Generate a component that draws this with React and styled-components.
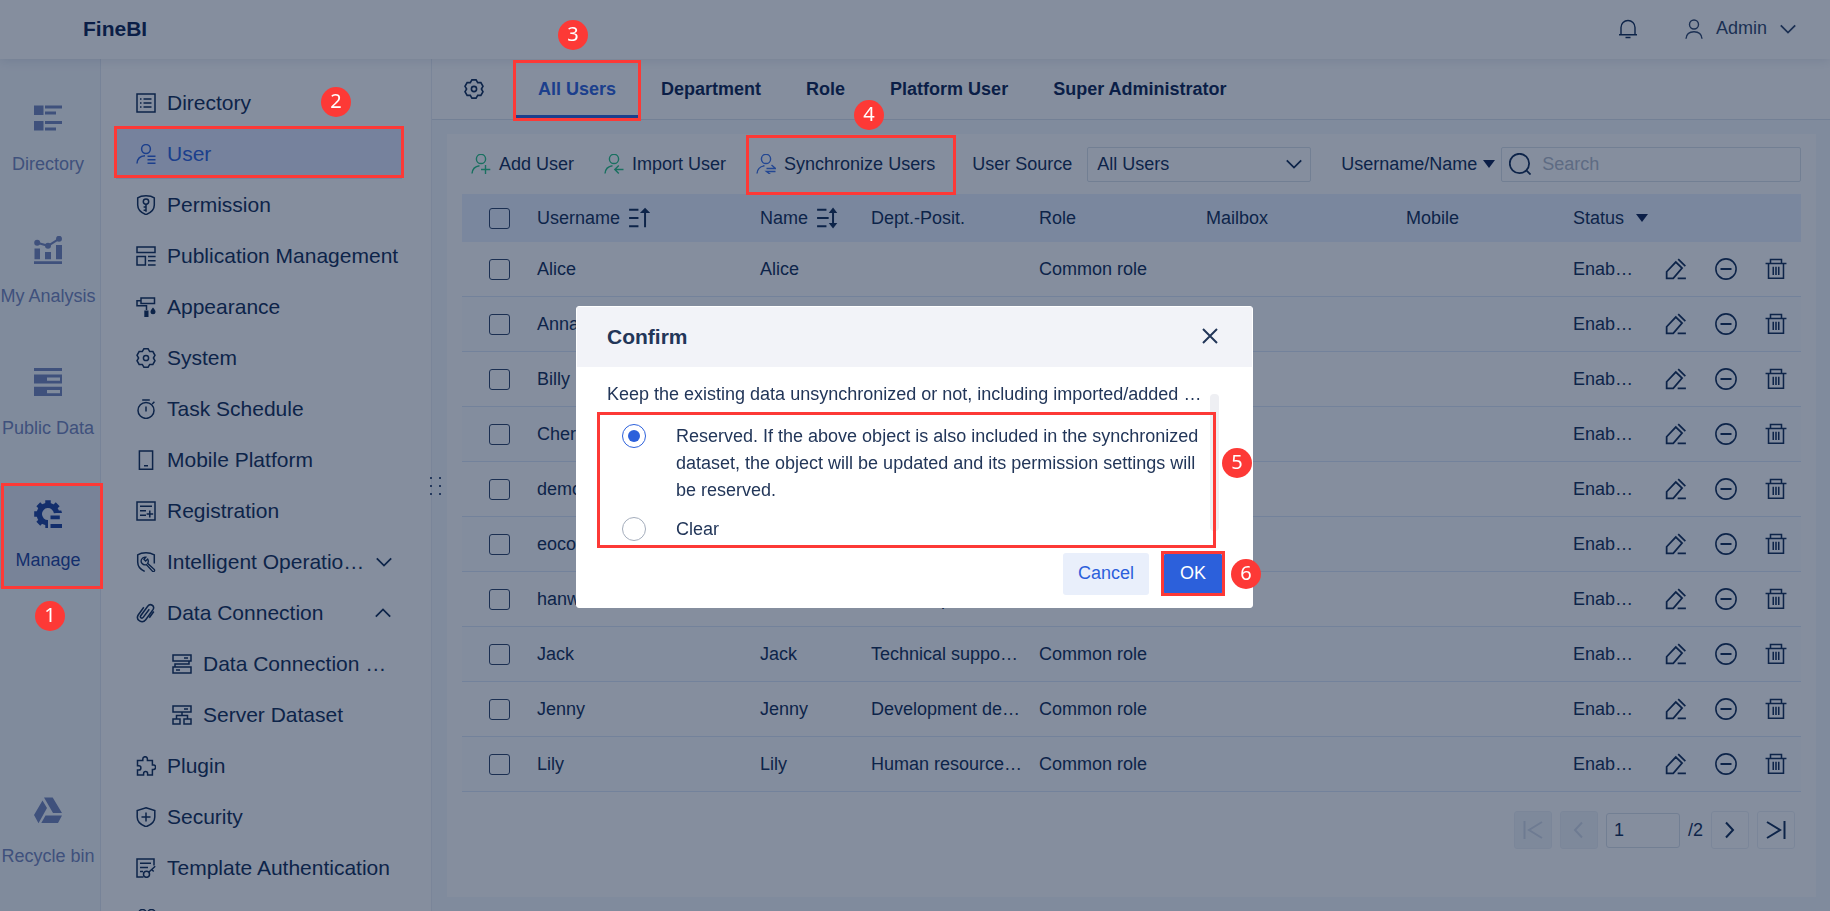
import { useState } from "react";
import styled, { createGlobalStyle, css } from "styled-components";

const GEAR =
  "M7.9.84h4.2l1.6 2.76 3.17-.01 2.12 3.66L17.4 10l1.59 2.75-2.12 3.66-3.17-.01-1.6 2.76H7.9l-1.6-2.76-3.17.01-2.12-3.66L2.6 10 1.01 7.25l2.12-3.66 3.17.01z";

const icons = {
  list: (
    <>
      <path d="M1 1h18v18H1z" />
      <path d="M7.5 6h8M7.5 10h8M7.5 14h8M4 6h1.5M4 10h1.5M4 14h1.5" />
    </>
  ),
  user: (
    <>
      <circle cx="10" cy="5" r="4.4" />
      <path d="M1 19.5c.3-4.6 3-7.4 8-7.7M11.5 12.3h8M11.5 15.8h8M11.5 19.3h8" />
    </>
  ),
  permission: (
    <>
      <path d="M10 .8c3 0 6 .4 8.3 2V10c0 5-3.3 7.7-8.3 9.6C5 17.7 1.7 15 1.7 10V2.8C4 1.2 7 .8 10 .8z" />
      <circle cx="10" cy="6.6" r="2.7" />
      <path d="M10 9.3v7.4M10 12H7.6M10 15.2H7.6" />
    </>
  ),
  publication: (
    <path d="M1 1h18v5.6H1zM1 10.4h8.4V19H1zM12 10.4h7.6M12 14.7h7.6M12 19h7.6" />
  ),
  appearance: (
    <>
      <path d="M5 1h13.5v5.6H5zM5 3.8H1v5h9.5V13" />
      <path d="M8.3 13.5h4.2V20H8.3zM17 10.5c1.6 2 2.5 3 2.5 4.2a2.5 2.5 0 0 1-5 0c0-1.2.9-2.2 2.5-4.2z" fill="currentColor" stroke="none" />
    </>
  ),
  gear: (
    <>
      <path d={GEAR} />
      <circle cx="10" cy="10" r="2.6" />
    </>
  ),
  timer: (
    <>
      <circle cx="10" cy="11.4" r="8" />
      <path d="M6.2 1h7.6M10 7.5v5M16.2 5l2.2-2.2" />
    </>
  ),
  mobile: <path d="M3.4 1h13.2v18.3H3.4zM8 15.7h4" />,
  registration: (
    <path d="M1 1h18v18H1zM4 5.3h12M4 9.8h6M4 14.3h6M13.8 9.6v6.8M10.6 13h6.6" />
  ),
  operation: (
    <>
      <path d="M18.300 11.500V2.800C15.500 1.300 13 .8 10 .8S4 1.300 1.700 2.800V10c0 5 2.600 7.500 7 9.400" />
      <path d="M9.800 5.200 7.900 7.300 9.600 9l2.100-1.900c1 1.700.8 3-.1 4.200l6.700 6.200c1 1.200-.6 2.700-1.800 1.700l-6.200-6.600c-3.300 1.200-6.300-2.300-4.700-5.300.9-1.700 2.600-2.500 4.200-2.100z" strokeWidth="1.300" />
    </>
  ),
  clip: (
    <path d="M13.3 6.2 7.200 14.400c-1.300 1.700-3.600.1-2.500-1.700l7-9.500c2.700-3.400 7.500-.3 5.300 3.500l-7.300 10C6.300 21.300-.7 17 2.200 12l5.600-7.700M17.800 8.500l-4.500 6.300" />
  ),
  connection: (
    <path d="M1 1h18v6H1zM1 13h18v6H1zM12 4h4M4 16h4M17 7v3H3v3" />
  ),
  dataset: (
    <path d="M1 1h18v6H1zM12 4h4M1 14h7v5H1zM12 14h7v5h-7zM10 7v3.5M4.5 14v-3.5h11V14" />
  ),
  plugin: (
    <path d="M1.5 4.5h5.3V3a2.300 2.300 0 0 1 4.600 0v1.500h5V9h1a2.200 2.200 0 0 1 0 4.400h-1V19h-4.800v-1.600a2 2 0 0 0-4 0V19H1.500v-5h1.300a2.100 2.100 0 0 0 0-4.200H1.500z" />
  ),
  security: (
    <path d="M10 .8 18.800 3.500V10c0 5-4 8-8.800 9.700C5.200 18 1.200 15 1.200 10V3.500zM10 5.500v9M5.500 10h9" />
  ),
  template: (
    <>
      <path d="M18 7.500V1H1v18h6.500M4 5.200h11M4 9.400h8M4 13.600h3" />
      <circle cx="10.5" cy="16.3" r="3" />
      <path d="m12.700 14.200 6.500-6M15.700 11.500l2 2" />
    </>
  ),
  version: (
    <>
      <circle cx="6.500" cy="4.500" r="4" />
      <circle cx="15.500" cy="4.500" r="4" />
    </>
  ),
  addUser: (
    <>
      <circle cx="10" cy="4.9" r="4.6" />
      <path d="M1 19.500c.4-4.300 2.700-7 7.500-7.700M14.500 11v9M10 15.500h9.300" />
    </>
  ),
  importUser: (
    <>
      <circle cx="10" cy="4.9" r="4.6" />
      <path d="M1 19.500c.4-4.300 2.700-7 7.500-7.700M19.500 15.500H11M14.800 11.500l-4 4 4 4" />
    </>
  ),
  syncUser: (
    <>
      <circle cx="10" cy="4.9" r="4.6" />
      <path d="M1 19.500c.4-4.300 2.700-7 7.500-7.700M10.500 14.500h9l-4-3.500M19.500 17.500h-9l4 3" />
    </>
  ),
  bell: (
    <path d="M1 15.800h18M3 15.800V8.500a7 7 0 0 1 14 0v7.300M7.500 18.500h5" />
  ),
  person: (
    <>
      <circle cx="10" cy="5.500" r="4.500" />
      <path d="M2 19.800c.4-4.600 3.400-7 8-7s7.600 2.400 8 7" />
    </>
  ),
  search: (
    <>
      <circle cx="9.500" cy="9.500" r="8.800" />
      <path d="m15.600 15.600 4 4" />
    </>
  ),
  down: <path d="m2 6 8 8 8-8" />,
  up: <path d="m2 14 8-8 8 8" />,
  close: <path d="m3 3 14 14M17 3 3 17" />,
  edit: (
    <path d="M1.500 18.500v-6l8.300-8.800 5.700 5.400-8 9.400zM12 1l6.500 6.300M11.500 18.500h7.500" />
  ),
  minus: (
    <>
      <circle cx="10" cy="10" r="9.200" />
      <path d="M5 10h10" strokeWidth="1.800" />
    </>
  ),
  trash: (
    <path d="M.5 5h19M5 5V1.300h10V5M3.200 5v13.500h13.600V5M7.500 8v7.500M10 8v7.500M12.500 8v7.500" />
  ),
  sortUp: (
    <path d="M1 2.500h8.500M1 10h8.500M1 17.500h8.500M15.500 18.500V3M13 4.500 15.500 2 18 4.500z" strokeWidth="1.800" />
  ),
  sortBoth: (
    <path d="M1 2.500h8.500M1 10h10.500M1 17.500h8.500M15.500 17V3M13.500 4.500l2-2.500 2 2.500zM13.500 15.500l2 2.500 2-2.500z" strokeWidth="1.800" />
  ),
  next: <path d="m6 2.500 7 7.500-7 7.500" />,
  prev: <path d="M13 2.500 6 10l7 7.500" />,
  last: <path d="M1 2 14 10 1 18M18.500 1v18" />,
  first: <path d="M19 2 6 10l13 8M1.500 1v18" />,
};

const railIcons = {
  directory: (
    <path d="M0 1.500h9.500v9.500H0zM11 1.500h17v3H11zM11 7.500h11v3H11zM0 17h9.500v9.500H0zM11 17h17v3H11zM11 23.500h11v3H11z" />
  ),
  analysis: (
    <>
      <path d="M.5 12.500H6v10.800H.5zM11 16h6v7.300h-6zM22 9h6v14.300h-6zM0 25.300h28v3H0z" />
      <circle cx="3.200" cy="6.800" r="3" />
      <circle cx="14" cy="9.800" r="3" />
      <circle cx="25" cy="2.800" r="3" />
      <path d="m3.200 6.800 10.800 3 11-7" fill="none" stroke="currentColor" strokeWidth="2" />
    </>
  ),
  data: (
    <path
      fillRule="evenodd"
      d="M0 0h28v3H0zM0 6.500h28v9H0zM13 9.500v3.200h13V9.500zM0 18.700h28v9.300H0zM13 22v3.200h13V22z"
    />
  ),
  manage: (
    <>
      <path
        d="M22.600 13A8.700 8.700 0 1 0 14 22.800"
        fill="none"
        stroke="currentColor"
        strokeWidth="5.4"
      />
      <path
        d="M14 5V.2M5 14H.2M20.500 7.500l3.200-3.200M7.500 7.500 4.300 4.300M7.500 20.500l-3.200 3.200"
        fill="none"
        stroke="currentColor"
        strokeWidth="5.500"
      />
      <path d="M11.300 22H14v6h-2.700zM22 10.500h5.300l.7 2.500h-6zM16.500 15.500h9.300v3.700h-9.300zM16.500 24H28v4H16.500z" />
    </>
  ),
  recycle: (
    <path d="M10 1.500h8.700L28 17h-9zM8.500 4.500 13 12 4.500 27.200 0 19zM11.500 19.500H28L24 27H7.300z" />
  ),
};

const Icon = ({ name, size = 20, weight = 1.4 }) => (
  <LineIcon
    viewBox="0 0 20 20"
    width={size}
    height={size}
    strokeWidth={weight}
    aria-hidden="true"
  >
    {icons[name]}
  </LineIcon>
);

const railItems = [
  { icon: "directory", label: "Directory" },
  { icon: "analysis", label: "My Analysis" },
  { icon: "data", label: "Public Data" },
  { icon: "manage", label: "Manage" },
];

const menuItems = [
  { icon: "list", label: "Directory" },
  { icon: "user", label: "User", active: true },
  { icon: "permission", label: "Permission" },
  { icon: "publication", label: "Publication Management" },
  { icon: "appearance", label: "Appearance" },
  { icon: "gear", label: "System" },
  { icon: "timer", label: "Task Schedule" },
  { icon: "mobile", label: "Mobile Platform" },
  { icon: "registration", label: "Registration" },
  { icon: "operation", label: "Intelligent Operatio…", arrow: "down" },
  { icon: "clip", label: "Data Connection", arrow: "up" },
  { icon: "connection", label: "Data Connection …", sub: true },
  { icon: "dataset", label: "Server Dataset", sub: true },
  { icon: "plugin", label: "Plugin" },
  { icon: "security", label: "Security" },
  { icon: "template", label: "Template Authentication" },
  { icon: "version", label: "" },
];

const tabs = [
  "All Users",
  "Department",
  "Role",
  "Platform User",
  "Super Administrator",
];

const users = [
  { username: "Alice", name: "Alice", role: "Common role" },
  { username: "Anna" },
  { username: "Billy" },
  { username: "Cherr" },
  { username: "demo" },
  { username: "eoco" },
  { username: "hanw", dept: "Sales department" },
  {
    username: "Jack",
    name: "Jack",
    dept: "Technical suppo…",
    role: "Common role",
  },
  {
    username: "Jenny",
    name: "Jenny",
    dept: "Development de…",
    role: "Common role",
  },
  {
    username: "Lily",
    name: "Lily",
    dept: "Human resource…",
    role: "Common role",
  },
];

const RailEntry = ({ icon, label, active, children }) => (
  <RailLink href="#" $active={active}>
    <svg viewBox="0 0 28 28" width="28" height="28" fill="currentColor">
      {railIcons[icon]}
    </svg>
    <span>{label}</span>
    {children}
  </RailLink>
);

const UserTable = () => (
  <Table>
    <colgroup>
      <col width="75" />
      <col width="223" />
      <col width="111" />
      <col width="168" />
      <col width="167" />
      <col />
      <col width="167" />
      <col width="84" />
      <col width="144" />
    </colgroup>
    <thead>
      <tr>
        <th>
          <Checkbox type="checkbox" aria-label="Select all users" />
        </th>
        <th>
          <HeadCell>
            Username
            <Icon name="sortUp" size={22} />
          </HeadCell>
        </th>
        <th>
          <HeadCell>
            Name
            <Icon name="sortBoth" size={22} />
          </HeadCell>
        </th>
        <th>Dept.-Posit.</th>
        <th>Role</th>
        <th>Mailbox</th>
        <th>Mobile</th>
        <th>
          <HeadCell $gap={12}>
            Status
            <Caret />
          </HeadCell>
        </th>
        <th></th>
      </tr>
    </thead>
    <tbody>
      {users.map((user) => (
        <tr key={user.username}>
          <td>
            <Checkbox type="checkbox" aria-label={`Select ${user.username}`} />
          </td>
          <td>{user.username}</td>
          <td>{user.name}</td>
          <td>{user.dept}</td>
          <td>{user.role}</td>
          <td></td>
          <td></td>
          <td>Enab…</td>
          <td>
            <RowActions>
              <IconButton aria-label="Edit">
                <Icon name="edit" size={22} weight={1.6} />
              </IconButton>
              <IconButton aria-label="Disable">
                <Icon name="minus" size={22} />
              </IconButton>
              <IconButton aria-label="Delete">
                <Icon name="trash" size={22} />
              </IconButton>
            </RowActions>
          </td>
        </tr>
      ))}
    </tbody>
  </Table>
);

const ConfirmDialog = () => {
  const [mode, setMode] = useState("reserved");

  return (
    <Mask>
      <Dialog role="dialog" aria-labelledby="confirm-title">
        <DialogHeader>
          <h2 id="confirm-title">Confirm</h2>
          <IconButton aria-label="Close">
            <Icon name="close" weight={2} />
          </IconButton>
        </DialogHeader>
        <DialogBody>
          <p>
            Keep the existing data unsynchronized or not, including
            imported/added …
          </p>
          <Options>
            <Option>
              <Radio
                type="radio"
                name="mode"
                checked={mode === "reserved"}
                onChange={() => setMode("reserved")}
              />
              <span>
                Reserved. If the above object is also included in the
                synchronized dataset, the object will be updated and its
                permission settings will be reserved.
              </span>
            </Option>
            <Option>
              <Radio
                type="radio"
                name="mode"
                checked={mode === "clear"}
                onChange={() => setMode("clear")}
              />
              <span>Clear</span>
            </Option>
          </Options>
          <ScrollThumb />
          <Outline $top={45} $right={36} $bottom={-5} $left={20} />
          <Badge $top={81} $right={0}>
            5
          </Badge>
        </DialogBody>
        <DialogFooter>
          <DialogButton>Cancel</DialogButton>
          <DialogButton $primary>
            OK
            <Outline $top={-2} $right={-3} $bottom={-1} $left={-3} />
            <Badge $top={6} $right={-39}>
              6
            </Badge>
          </DialogButton>
        </DialogFooter>
      </Dialog>
    </Mask>
  );
};

export default function App() {
  return (
    <Page>
      <GlobalStyle />
      <Header>
        <h1>FineBI</h1>
        <IconButton aria-label="Notifications">
          <Icon name="bell" />
        </IconButton>
        <Account>
          <Icon name="person" />
          <span>Admin</span>
          <Icon name="down" size={18} weight={2} />
        </Account>
      </Header>

      <Content>
        <Rail>
          {railItems.map((item) => (
            <RailEntry
              key={item.label}
              {...item}
              active={item.label === "Manage"}
            >
              {item.label === "Manage" && (
                <>
                  <Outline $top={-3} $right={-3} $bottom={-1} $left={1} />
                  <Badge $top={115} $left={35}>
                    1
                  </Badge>
                </>
              )}
            </RailEntry>
          ))}
          <RailSpacer />
          <RailEntry icon="recycle" label="Recycle bin" />
        </Rail>

        <Menu>
          {menuItems.map((item) => (
            <MenuLink
              href="#"
              key={item.icon}
              $active={item.active}
              $sub={item.sub}
            >
              <Icon name={item.icon} weight={1.5} />
              <span>{item.label}</span>
              {item.arrow && <Icon name={item.arrow} size={18} weight={2} />}
              {item.active && (
                <>
                  <Outline $top={-2} $right={-2} $bottom={1} $left={-2} />
                  <Badge $top={-41} $left={205}>
                    2
                  </Badge>
                </>
              )}
            </MenuLink>
          ))}
        </Menu>

        <Main>
          <DragHandle>
            {[1, 2, 3, 4, 5, 6].map((dot) => (
              <i key={dot} />
            ))}
          </DragHandle>
          <TabBar>
            <IconButton aria-label="Settings">
              <Icon name="gear" weight={1.6} />
            </IconButton>
            <nav>
              {tabs.map((tab, index) => (
                <Tab key={tab} $active={index === 0}>
                  {tab}
                  {index === 0 && (
                    <>
                      <Outline $top={1} $right={-3} $bottom={-3} $left={-3} />
                      <Badge $top={-39} $left={42}>
                        3
                      </Badge>
                    </>
                  )}
                </Tab>
              ))}
            </nav>
          </TabBar>

          <Panel>
            <Toolbar>
              <ToolButton $color="#27c283">
                <Icon name="addUser" />
                Add User
              </ToolButton>
              <ToolButton $color="#27c283">
                <Icon name="importUser" />
                Import User
              </ToolButton>
              <ToolButton $color="#3a70e8">
                <Icon name="syncUser" />
                Synchronize Users
                <Outline $top={-12} $right={-21} $bottom={-13} $left={-10} />
                <Badge $top={-47} $left={98}>
                  4
                </Badge>
              </ToolButton>
              <Source>
                User Source
                <SelectWrapper>
                  <select defaultValue="All Users">
                    <option>All Users</option>
                  </select>
                  <Icon name="down" size={18} weight={2} />
                </SelectWrapper>
              </Source>
              <FilterButton>
                Username/Name
                <Caret />
              </FilterButton>
              <SearchBox>
                <Icon name="search" size={22} weight={1.6} />
                <input placeholder="Search" aria-label="Search" />
              </SearchBox>
            </Toolbar>

            <UserTable />

            <Pagination>
              <PageButton disabled aria-label="First page">
                <Icon name="first" weight={2} />
              </PageButton>
              <PageButton disabled aria-label="Previous page">
                <Icon name="prev" weight={2} />
              </PageButton>
              <input defaultValue="1" aria-label="Page" />
              <span>/2</span>
              <PageButton aria-label="Next page">
                <Icon name="next" weight={2} />
              </PageButton>
              <PageButton aria-label="Last page">
                <Icon name="last" weight={2} />
              </PageButton>
            </Pagination>
          </Panel>
        </Main>
      </Content>

      <ConfirmDialog />
    </Page>
  );
}

const GlobalStyle = createGlobalStyle`
  * {
    box-sizing: border-box;
  }

  body {
    margin: 0;
    color: #0e2a55;
    font-family: "Liberation Sans", Arial, sans-serif;
    font-size: 18px;
    line-height: 27px;
  }

  h1, h2, p {
    margin: 0;
  }

  button, input, select {
    padding: 0;
    border: none;
    background: none;
    color: inherit;
    font: inherit;
  }

  a {
    color: inherit;
    text-decoration: none;
  }
`;

const LineIcon = styled.svg`
  flex: none;
  fill: none;
  stroke: currentColor;
`;

const Page = styled.div`
  display: flex;
  flex-direction: column;
  height: 100vh;
  overflow: hidden;
  background: #ffffff;
`;

const Header = styled.header`
  position: relative;
  z-index: 1;
  display: flex;
  flex: none;
  align-items: center;
  height: 59px;
  padding: 0 33px 2px 83px;
  background: #ffffff;
  box-shadow: 0 2px 10px rgba(30, 60, 110, 0.12);

  h1 {
    margin-right: auto;
    color: #0b1f50;
    font-size: 21px;
  }
`;

const Account = styled.button`
  display: flex;
  align-items: center;
  gap: 12px;
  margin-left: 46px;
  color: #2c4369;
`;

const IconButton = styled.button`
  display: flex;
`;

const Content = styled.div`
  display: flex;
  flex: 1;
  min-height: 0;
`;

const Rail = styled.nav`
  display: flex;
  flex: none;
  flex-direction: column;
  gap: 30px;
  width: 101px;
  padding: 31px 0 27px;
  border-right: 1px solid #e3e9f2;
  background: #f5f8fb;
`;

const RailSpacer = styled.div`
  flex: 1;
`;

const RailLink = styled.a`
  position: relative;
  display: flex;
  flex-direction: column;
  align-items: center;
  gap: 18px;
  padding: 14px 4px 14px 0;
  line-height: 28px;
  white-space: nowrap;
  color: ${({ $active }) => ($active ? "#1b3e9a" : "#7284ba")};
  background: ${({ $active }) => ($active ? "#e4e9f3" : "transparent")};
`;

const Menu = styled.nav`
  flex: none;
  width: 331px;
  padding: 18px 29px 0 15px;
  overflow: hidden;
  border-right: 1px solid #e8edf4;
  font-size: 21px;
`;

const MenuLink = styled.a`
  position: relative;
  display: flex;
  align-items: center;
  gap: 11px;
  height: 51px;
  padding: 0 10px 0 ${({ $sub }) => ($sub ? "56px" : "20px")};
  white-space: nowrap;

  span {
    flex: 1;
  }

  ${({ $active }) =>
    $active &&
    css`
      color: #2c60db;
      background: #e0e7fc;
    `}
`;

const Main = styled.main`
  position: relative;
  display: flex;
  flex: 1;
  flex-direction: column;
  min-width: 0;
  background: #f5f8fc;
`;

const DragHandle = styled.div`
  position: absolute;
  top: 418px;
  left: -2px;
  display: grid;
  grid-template-columns: 2px 2px;
  gap: 6px 7px;

  i {
    height: 2px;
    background: #3d547c;
  }
`;

const TabBar = styled.div`
  display: flex;
  flex: none;
  align-items: center;
  gap: 32px;
  height: 61px;
  padding-left: 32px;
  border-bottom: 1px solid #dbe3ec;
  background: #ffffff;

  nav {
    display: flex;
    gap: 1px;
    height: 100%;
    padding-bottom: 1px;
  }
`;

const Tab = styled.button`
  position: relative;
  padding: 2px 22px 0;
  font-weight: bold;
  color: ${({ $active }) => ($active ? "#2c60db" : "#0b1f50")};
  box-shadow: ${({ $active }) => ($active ? "inset 0 -3px #2c60db" : "none")};
`;

const Panel = styled.section`
  flex: 1;
  margin: 14px 14px 14px 15px;
  padding: 0 15px;
  background: #ffffff;
`;

const Toolbar = styled.div`
  display: flex;
  align-items: center;
  gap: 30px;
  height: 60px;
  padding-left: 9px;
  white-space: nowrap;
`;

const ToolButton = styled.button`
  position: relative;
  display: flex;
  align-items: center;
  gap: 8px;
  height: 35px;

  svg {
    color: ${({ $color }) => $color};
  }
`;

const Source = styled.label`
  display: flex;
  align-items: center;
  gap: 15px;
  margin-left: 7px;
`;

const SelectWrapper = styled.span`
  position: relative;

  select {
    display: block;
    width: 224px;
    height: 35px;
    padding: 0 9px;
    appearance: none;
    border: 1px solid #d8e0e9;
    border-radius: 2px;
  }

  svg {
    position: absolute;
    top: 8px;
    right: 8px;
    pointer-events: none;
  }
`;

const Caret = styled.i`
  border: solid transparent;
  border-width: 8px 6px 0;
  border-top-color: #0b1f50;
`;

const FilterButton = styled.button`
  display: flex;
  align-items: center;
  gap: 6px;
  margin: 0 -24px 0 auto;
`;

const SearchBox = styled.div`
  display: flex;
  align-items: center;
  gap: 11px;
  width: 300px;
  height: 35px;
  padding: 0 7px;
  border: 1px solid #d8e0e9;
  border-radius: 2px;

  input {
    flex: 1;
    min-width: 0;
    outline: none;
  }

  input::placeholder {
    color: #b0b9c8;
  }
`;

const Table = styled.table`
  width: 100%;
  table-layout: fixed;
  border-collapse: separate;
  border-spacing: 0;

  th,
  td {
    padding: 0;
    font-weight: normal;
    text-align: left;
    white-space: nowrap;
  }

  th {
    height: 48px;
    background: #e9f1ff;
  }

  td {
    height: 55px;
    border-bottom: 1px solid #dbe7f8;
  }

  th:first-child,
  td:first-child {
    padding-left: 27px;
  }

  tbody tr:nth-child(even) {
    background: #fafcff;
  }
`;

const HeadCell = styled.div`
  display: flex;
  align-items: center;
  gap: ${({ $gap }) => $gap || 8}px;
`;

const Checkbox = styled.input`
  display: block;
  width: 21px;
  height: 21px;
  margin: 0;
  appearance: none;
  border: 1px solid #2a4166;
  border-radius: 3px;
`;

const RowActions = styled.div`
  display: flex;
  gap: 28px;
  padding-left: 8px;
`;

const Pagination = styled.div`
  display: flex;
  align-items: center;
  justify-content: flex-end;
  gap: 8px;
  padding: 19px 6px 0 0;

  input {
    width: 74px;
    height: 35px;
    padding: 0 7px;
    border: 1px solid #d8e0e9;
    border-radius: 3px;
  }
`;

const PageButton = styled.button`
  display: flex;
  align-items: center;
  justify-content: center;
  width: 38px;
  height: 38px;
  border: 1px solid #ebeff5;
  border-radius: 3px;

  &:disabled {
    color: #d0d8e6;
    background: #f1f5f9;
  }
`;

const Mask = styled.div`
  position: fixed;
  inset: 0;
  z-index: 10;
  display: flex;
  align-items: center;
  justify-content: center;
  padding: 3px 1px 0 0;
  background: rgba(11, 29, 61, 0.5);
`;

const Dialog = styled.div`
  width: 677px;
  border: 1px solid #ffffff;
  border-radius: 3px;
  background: #ffffff;
  color: #223659;
`;

const DialogHeader = styled.div`
  display: flex;
  align-items: center;
  justify-content: space-between;
  height: 60px;
  padding: 0 32px 2px 30px;
  background: #f2f3f8;

  h2 {
    font-size: 21px;
  }
`;

const DialogBody = styled.div`
  position: relative;
  padding: 14px 48px 0 30px;

  p {
    white-space: nowrap;
  }
`;

const Options = styled.div`
  display: flex;
  flex-direction: column;
  gap: 12px;
  padding: 15px 0 0 15px;
`;

const Option = styled.label`
  display: flex;
  align-items: flex-start;
  gap: 30px;
`;

const Radio = styled.input`
  display: grid;
  flex: none;
  place-items: center;
  width: 24px;
  height: 24px;
  margin: 1px 0 0;
  appearance: none;
  border: 1px solid #a3acbb;
  border-radius: 50%;

  &:checked {
    border-color: #2c60db;
  }

  &:checked::before {
    content: "";
    width: 12px;
    height: 12px;
    border-radius: 50%;
    background: #2c60db;
  }
`;

const ScrollThumb = styled.div`
  position: absolute;
  top: 27px;
  right: 33px;
  width: 9px;
  height: 137px;
  border-radius: 4px;
  background: #eeeff3;
`;

const DialogFooter = styled.div`
  display: flex;
  justify-content: flex-end;
  gap: 15px;
  padding: 10px 30px 12px;
`;

const DialogButton = styled.button`
  position: relative;
  width: ${({ $primary }) => ($primary ? "58px" : "86px")};
  height: 42px;
  padding-bottom: 2px;
  border-radius: 3px;
  color: ${({ $primary }) => ($primary ? "#ffffff" : "#2c60db")};
  background: ${({ $primary }) => ($primary ? "#2c60db" : "#e9effb")};
`;

const Outline = styled.i`
  position: absolute;
  top: ${({ $top }) => $top}px;
  right: ${({ $right }) => $right}px;
  bottom: ${({ $bottom }) => $bottom}px;
  left: ${({ $left }) => $left}px;
  z-index: 20;
  border: 3px solid #fd3936;
  pointer-events: none;
`;

const Badge = styled.b`
  position: absolute;
  top: ${({ $top }) => $top}px;
  right: ${({ $right }) => ($right === undefined ? "auto" : `${$right}px`)};
  left: ${({ $left }) => ($left === undefined ? "auto" : `${$left}px`)};
  z-index: 21;
  width: 30px;
  height: 30px;
  border-radius: 50%;
  background: #fd3936;
  color: #ffffff;
  font: 20px/28px "Noto Sans", sans-serif;
  text-align: center;
`;
